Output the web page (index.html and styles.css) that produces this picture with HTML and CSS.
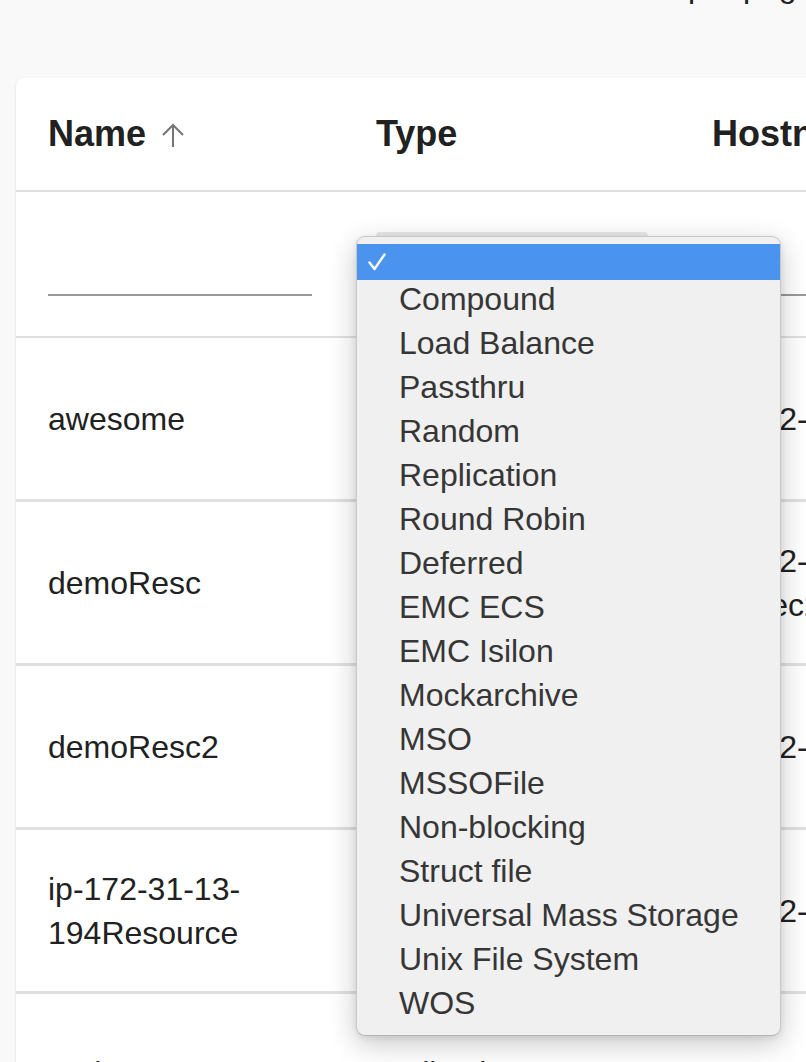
FILE: index.html
```html
<!DOCTYPE html>
<html lang="en">
<head>
<meta charset="utf-8">
<title>Resources</title>
<link rel="stylesheet" href="styles.css">
</head>
<body>
<div class="page">
  <div class="pager">Rows per page: 10</div>
  <div class="card">
    <div class="row head">
      <div class="cell">Name
        <svg class="sort" width="24" height="24" viewBox="0 0 24 24" aria-hidden="true"><path d="M12 2V24M2 12L12 2L22 12" fill="none" stroke="#757575" stroke-width="2"/></svg>
      </div>
      <div class="cell">Type</div>
      <div class="cell">Hostname</div>
      <div class="cell">Vault Path</div>
    </div>
    <div class="row filters">
      <div class="cell"><div class="input"></div></div>
      <div class="cell"><div class="select"></div></div>
      <div class="cell"><div class="input"></div></div>
      <div class="cell"><div class="input"></div></div>
    </div>
    <div class="row data">
      <div class="cell">awesome</div>
      <div class="cell">unixfilesystem</div>
      <div class="cell host">ip-172-31-13-194</div>
      <div class="cell">/var/lib/irods</div>
    </div>
    <div class="row data">
      <div class="cell">demoResc</div>
      <div class="cell">unixfilesystem</div>
      <div class="cell host">ip-172-31-13-194.ec2.internal</div>
      <div class="cell">/var/lib/irods/Vault</div>
    </div>
    <div class="row data">
      <div class="cell">demoResc2</div>
      <div class="cell">unixfilesystem</div>
      <div class="cell host">ip-172-31-13-194</div>
      <div class="cell">/var/lib/irods/Vault2</div>
    </div>
    <div class="row data">
      <div class="cell">ip-172-31-13-194Resource</div>
      <div class="cell">unixfilesystem</div>
      <div class="cell host">ip-172-31-13-194</div>
      <div class="cell">/var/lib/irods</div>
    </div>
    <div class="row data last">
      <div class="cell">replResc</div>
      <div class="cell">replication</div>
      <div class="cell host">EMPTY_RESC_HOST</div>
      <div class="cell">EMPTY_RESC_PATH</div>
    </div>
  </div>

  <div class="menu" role="listbox">
    <div class="opt checked"><svg class="check" width="18" height="18" viewBox="0 0 18 18" aria-hidden="true"><path d="M1.5 9.5L6.5 16L16.5 1.5" fill="none" stroke="#fff" stroke-width="2.4" stroke-linecap="round" stroke-linejoin="round"/></svg></div>
    <div class="opt">Compound</div>
    <div class="opt">Load Balance</div>
    <div class="opt">Passthru</div>
    <div class="opt">Random</div>
    <div class="opt">Replication</div>
    <div class="opt">Round Robin</div>
    <div class="opt">Deferred</div>
    <div class="opt">EMC ECS</div>
    <div class="opt">EMC Isilon</div>
    <div class="opt">Mockarchive</div>
    <div class="opt">MSO</div>
    <div class="opt">MSSOFile</div>
    <div class="opt">Non-blocking</div>
    <div class="opt">Struct file</div>
    <div class="opt">Universal Mass Storage</div>
    <div class="opt">Unix File System</div>
    <div class="opt">WOS</div>
  </div>
</div>
</body>
</html>
```

FILE: styles.css
```css
html, body {
  margin: 0;
  padding: 0;
  overflow: hidden;
  background: #f9f9f9;
}

body {
  font-family: "Liberation Sans", Arial, Helvetica, sans-serif;
  color: #212121;
}

.page {
  display: flow-root;
  position: relative;
  padding-left: 16px;
  height: 1062px;
}

.pager {
  margin-top: -34px;
  height: 40px;
  line-height: 40px;
  font-size: 32px;
  padding-left: 583px;
  white-space: nowrap;
  color: #212121;
}

.card {
  margin-top: 72px;
  width: 1400px;
  background: #fff;
  border-radius: 8px 0 0 0;
  box-shadow: 0 1px 3px rgba(0, 0, 0, 0.12);
}

.row {
  display: grid;
  grid-template-columns: 328px 336px 360px 1fr;
  box-sizing: border-box;
  align-items: center;
}

.cell {
  padding: 0 32px;
  font-size: 32px;
  line-height: 44px;
}

.host {
  padding-left: 28px;
}

.head {
  height: 114px;
  border-bottom: 2px solid #e0e0e0;
}

.head .cell {
  font-size: 36px;
  font-weight: bold;
  display: flex;
  align-items: center;
  white-space: nowrap;
  padding-left: 32px;
}

.sort {
  margin-left: 15px;
  margin-top: 2px;
}

.filters {
  height: 146px;
  border-bottom: 2px solid #e0e0e0;
  align-items: end;
  padding-bottom: 40px;
}

.input {
  height: 40px;
  border-bottom: 2px solid #999;
}

.select {
  height: 64px;
  background: #e9e9e9;
  border-radius: 4px 4px 0 0;
  border-bottom: 2px solid #999;
  box-sizing: border-box;
}

.data {
  height: 164px;
  border-bottom: 3px solid #e0e0e0;
}

.data.last {
  padding-bottom: 3px;
}

.menu {
  position: absolute;
  left: 356px;
  top: 236px;
  width: 425px;
  height: 800px;
  box-sizing: border-box;
  padding: 7px 0;
  background: #f0f0f0;
  border: 1px solid #c8c8c8;
  border-bottom-color: #b4b4b4;
  border-radius: 9px;
  box-shadow: 0 8px 28px rgba(0, 0, 0, 0.22), 0 2px 6px rgba(0, 0, 0, 0.08);
  font-size: 32px;
  color: #363636;
}

.opt {
  height: 44px;
  line-height: 38px;
  padding-left: 42px;
  white-space: nowrap;
}

.opt.checked {
  height: 36px;
  padding-left: 11px;
  background: #4a94f0;
  display: flex;
  align-items: center;
}
```
